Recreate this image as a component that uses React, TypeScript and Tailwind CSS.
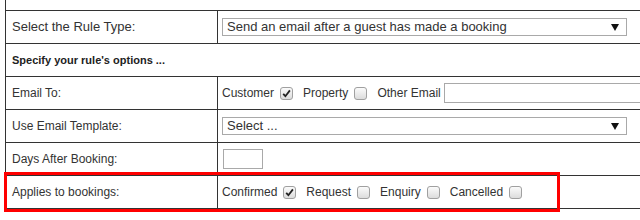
import React from 'react';

function Check({ checked = false }: { checked?: boolean }) {
  return (
    <span className="inline-flex h-[13px] w-[13px] items-center justify-center rounded-[3px] border border-[#a0a0a0] bg-gradient-to-b from-[#fbfbfb] to-[#dcdcdc] align-middle">
      {checked && (
        <svg width="9" height="9" viewBox="0 0 9 9">
          <path d="M1.2 4.8 L3.4 7.2 L7.9 1.4" fill="none" stroke="#222" strokeWidth="1.8" />
        </svg>
      )}
    </span>
  );
}

function Select({ value }: { value: string }) {
  return (
    <div className="flex h-[18px] w-[405px] items-center justify-between border border-[#a9a9a9] bg-white pl-[4px] pr-[7px] text-[13px] text-[#333]">
      <span>{value}</span>
      <svg width="8" height="7" viewBox="0 0 8 7">
        <path d="M0 0 H8 L4 7 Z" fill="#111" />
      </svg>
    </div>
  );
}

function Row({ label, big, children }: { label: string; big?: boolean; children: React.ReactNode }) {
  return (
    <div className="flex h-[33px] border-b border-[#333]">
      <div
        className={
          big
            ? 'flex w-[212px] shrink-0 items-center border-r border-[#333] pl-[6px] text-[13px] text-[#333]'
            : 'flex w-[212px] shrink-0 items-center border-r border-[#333] pl-[6px] text-[12px] text-[#333]'
        }
      >
        {label}
      </div>
      <div className="flex flex-1 items-center pl-[4px] text-[12px] text-[#333]">{children}</div>
    </div>
  );
}

export default function App() {
  return (
    <div
      className="relative h-[220px] w-[640px] overflow-hidden bg-white"
      style={{ fontFamily: '"Liberation Sans", Arial, sans-serif' }}
    >
      <div className="ml-[5px] w-[720px] border-l border-[#333]">
        <div className="h-[11px] border-b border-[#333]" />
        <Row label="Select the Rule Type:" big>
          <Select value="Send an email after a guest has made a booking" />
        </Row>
        <div className="flex h-[33px] items-center border-b border-[#333] pl-[6px] text-[11px] font-bold text-[#222]">
          Specify your rule's options ...
        </div>
        <Row label="Email To:">
          <span>Customer</span>
          <span className="ml-[6px]"><Check checked /></span>
          <span className="ml-[10px]">Property</span>
          <span className="ml-[6px]"><Check /></span>
          <span className="ml-[10px]">Other Email</span>
          <div className="ml-[3px] h-[20px] w-[260px] border border-[#a9a9a9]" />
        </Row>
        <Row label="Use Email Template:">
          <Select value="Select ..." />
        </Row>
        <Row label="Days After Booking:">
          <div className="ml-[1px] h-[20px] w-[40px] border border-[#a9a9a9]" />
        </Row>
        <Row label="Applies to bookings:">
          <span>Confirmed</span>
          <span className="ml-[6px]"><Check checked /></span>
          <span className="ml-[10px]">Request</span>
          <span className="ml-[6px]"><Check /></span>
          <span className="ml-[10px]">Enquiry</span>
          <span className="ml-[6px]"><Check /></span>
          <span className="ml-[10px]">Cancelled</span>
          <span className="ml-[6px]"><Check /></span>
        </Row>
      </div>
      <div className="absolute left-[4px] top-[172px] h-[40px] w-[556px] border-[3px] border-[#f00]" />
    </div>
  );
}
